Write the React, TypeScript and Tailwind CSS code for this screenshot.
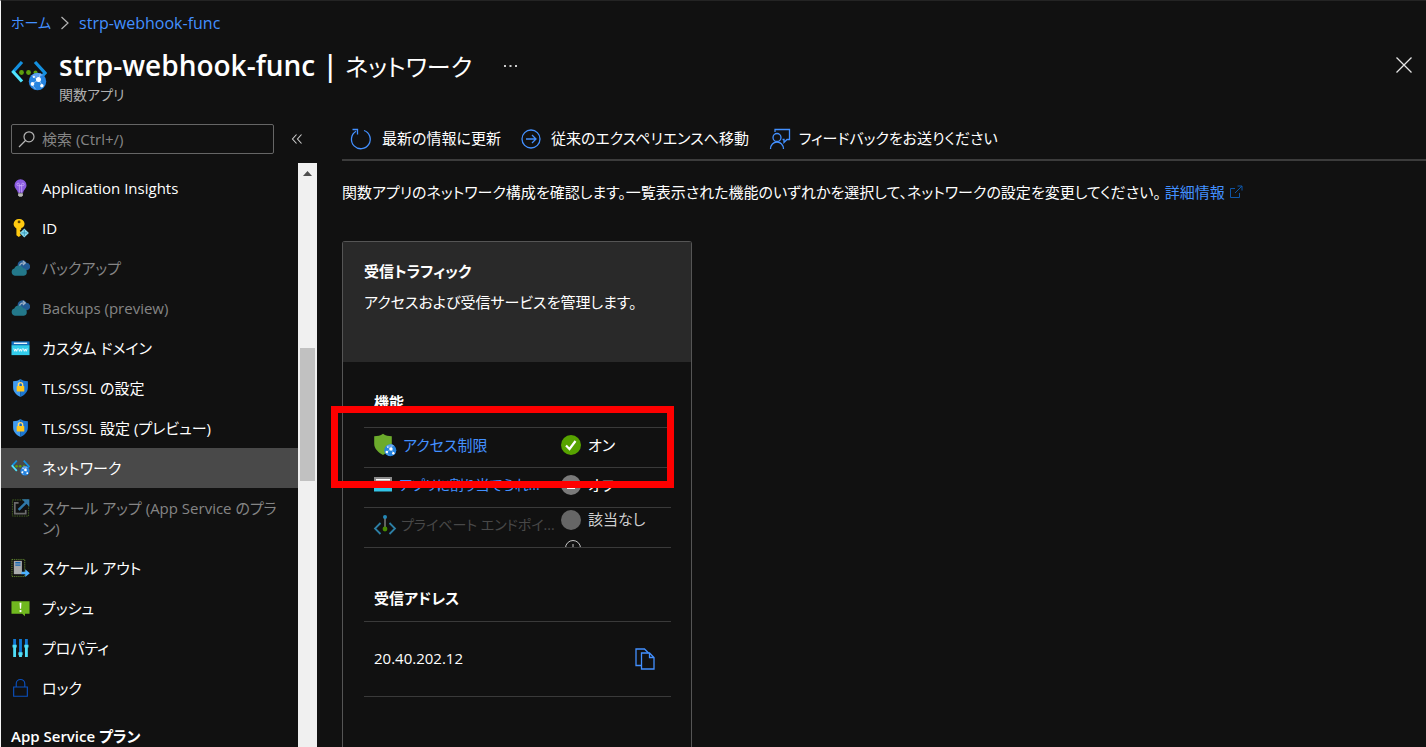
import type { ReactNode } from "react";

type IconProps = { className?: string };

const Globe = ({ x, y, r }: { x: number; y: number; r: number }) => (
  <g transform={`translate(${x} ${y}) scale(${r / 9})`}>
    <circle r="9" fill="#2583df" />
    <path d="M-6.500 -6 A9 9 0 0 1 6 -6.700 L0 -4z" fill="#5ea0ef" />
    <path
      d="M-6 3 L1 -2 L5 4 M1 -2 L3 -8 M-6 3 L-2 8 M1 -2 L-5 -5"
      stroke="#9cc8f5"
      strokeWidth=".9"
      fill="none"
    />
    <circle cx="1" cy="-2" r="2.6" fill="#fff" />
    <circle cx="-5.200" cy="2.500" r="1.900" fill="#fff" />
    <circle cx="4.500" cy="4.500" r="1.800" fill="#fff" />
    <circle cx="-3.800" cy="-4.800" r="1.200" fill="#e5f1fd" />
  </g>
);

const NetworkIcon = ({ className }: IconProps) => (
  <svg viewBox="0 0 36 30" className={className} aria-hidden="true">
    <path d="M11 1 1.500 11.500" stroke="#1490df" strokeWidth="3.200" />
    <path d="M1.500 10 11 20.500" stroke="#50e6ff" strokeWidth="3.200" />
    <path d="M24 1 34 12 31 15.500" stroke="#1490df" strokeWidth="3.200" fill="none" />
    <circle cx="10.500" cy="11.500" r="2.400" fill="#5ea00c" />
    <circle cx="17.500" cy="11.500" r="2.400" fill="#5ea00c" />
    <circle cx="24.500" cy="11.500" r="2" fill="#5ea00c" />
    <Globe x={26.500} y={20.500} r={8.700} />
  </svg>
);

const BulbIcon = ({ className }: IconProps) => (
  <svg viewBox="0 0 20 20" className={className} aria-hidden="true">
    <path
      d="M10 .8a6.300 6.300 0 0 0-6.300 6.300c0 3.600 3.300 4.700 3.500 8h5.600c.2-3.300 3.500-4.400 3.500-8A6.300 6.300 0 0 0 10 .8z"
      fill="#8a5be0"
    />
    <path
      d="M8.800 15V7.500M11.200 15V7.500M8.800 7.500H7.500a1.300 1.300 0 1 1 1.300-1.300v1.300h2.400V6.200a1.300 1.300 0 1 1 1.300 1.300z"
      stroke="#c7a8fa"
      strokeWidth=".8"
      fill="none"
    />
    <path d="M7.500 15.500h5v2.200l-1.200 1.500H8.700l-1.200-1.500z" fill="#b5b5b5" />
  </svg>
);

const KeyIcon = ({ className }: IconProps) => (
  <svg viewBox="0 0 20 20" className={className} aria-hidden="true">
    <path
      d="M8.500.5a5.600 5.600 0 0 0-5.800 5.300c0 2 1.200 3.600 3 4.600v7.100l2.500 2 2.300-2-1.300-1.500 1.300-1.500-1.300-1.700 1.600-1.400v-1.300a5 5 0 0 0 3.500-4.500A5.500 5.500 0 0 0 8.500.5z"
      fill="#ffca10"
    />
    <circle cx="8.500" cy="3.600" r="1.500" fill="#5f4300" />
    <path d="M14 10.500 18.800 15.200 14 20 9.200 15.200z" fill="#8bdcf0" />
    <path d="M14 12v6.500M11 15.200h6" stroke="#2f93b5" strokeWidth=".9" />
  </svg>
);

const BackupIcon = ({ className }: IconProps) => (
  <svg viewBox="0 0 20 20" className={className} aria-hidden="true">
    <path d="M7 12V6.500A5 5 0 0 1 16.300 4.500 4 4 0 0 1 17 12.400z" fill="#215a94" />
    <path d="M9 8c.5-2.500 2.500-3.500 5-3.300M12.500 2.500 15 4.800l-2.500 2" stroke="#a0b2c6" strokeWidth="1.300" fill="none" />
    <path d="M4 18.200a3.900 3.900 0 0 1-.5-7.600 5 5 0 0 1 9.300-.3 4 4 0 0 1 .7 7.900z" fill="#23788a" />
  </svg>
);

const DomainIcon = ({ className }: IconProps) => (
  <svg viewBox="0 0 20 20" className={className} aria-hidden="true">
    <path d="M.5 3h19v4H.5z" fill="#0f6cbd" />
    <path d="M3 4.300h14v1.400H3z" fill="#fff" />
    <path d="M.5 7h19v10.500H.5z" fill="#32cdec" />
    <path
      d="m3 10.500 1 3 1-2.500 1 2.500 1-3m1 0 1 3 1-2.500 1 2.500 1-3m1 0 1 3 1-2.500 1 2.500 1-3"
      stroke="#fff"
      strokeWidth=".9"
      fill="none"
    />
  </svg>
);

const SslIcon = ({ className }: IconProps) => (
  <svg viewBox="0 0 20 20" className={className} aria-hidden="true">
    <path d="M10 .5C8 2.300 5 2.800 2.200 2.800v6.600c0 5 3.800 8 7.800 10.100z" fill="#3f9bf0" />
    <path d="M10 .5c2 1.800 5 2.300 7.800 2.300v6.600c0 5-3.800 8-7.800 10.100z" fill="#1b76d2" />
    <path d="M7.700 8.500V6.600a2.300 2.300 0 0 1 4.600 0v1.900" stroke="#ffd86a" strokeWidth="1.400" fill="none" />
    <rect x="6" y="8" width="8" height="5.800" rx=".7" fill="#ffc81e" />
  </svg>
);

const ScaleUpIcon = ({ className }: IconProps) => (
  <svg viewBox="0 0 20 20" className={className} aria-hidden="true">
    <rect x="1.500" y="1.500" width="17" height="17" fill="none" stroke="#456322" strokeDasharray="1.500 1" />
    <path d="M8 4.500H4v11.500h11.500v-4" stroke="#6b6b6b" strokeWidth="1.800" fill="none" />
    <path d="m8 12 8-8" stroke="#2f78a8" strokeWidth="2.600" />
    <path d="M11.500.8h7.800v7.800z" fill="#2f78a8" />
  </svg>
);

const ScaleOutIcon = ({ className }: IconProps) => (
  <svg viewBox="0 0 20 20" className={className} aria-hidden="true">
    <rect x="1" y="1" width="13.500" height="18" fill="none" stroke="#6f9a35" strokeDasharray="1 1" />
    <path d="M3 2.500h8.500v14H3z" fill="#a9aaac" />
    <path d="M4.500 4.500h5.500M4.500 7h5.500" stroke="#1769b5" strokeWidth="1.400" />
    <path d="M11 14h4v-2.800l4.800 4.300-4.800 4v-2.800h-4z" fill="#4cb1ff" />
  </svg>
);

const PushIcon = ({ className }: IconProps) => (
  <svg viewBox="0 0 20 20" className={className} aria-hidden="true">
    <path d="M.5 3h19v13h-4.800v2.800L11.800 16H.5z" fill="#70b81f" />
    <path d="M9 4.500h2l-.4 6.300H9.400z" fill="#fff" />
    <circle cx="10" cy="13.200" r="1.200" fill="#fff" />
  </svg>
);

const PropertiesIcon = ({ className }: IconProps) => (
  <svg viewBox="0 0 20 20" className={className} aria-hidden="true">
    <path d="M3.800.5v7M10 .5v15M16.200.5v7" stroke="#0f78d4" strokeWidth="3" />
    <path d="M3.800 9v10.500M16.200 9v10.500M10 17v2.500" stroke="#50dff8" strokeWidth="3" />
    <path d="M1.600 6.500h4.400v3H1.600zM14 6.500h4.400v3H14zM7.800 14.500h4.400v3H7.800z" fill="#50dff8" />
  </svg>
);

const LockIcon = ({ className }: IconProps) => (
  <svg viewBox="0 0 20 20" className={className} aria-hidden="true">
    <path d="M2.800 9h14.400v9.700H2.800zM5.500 9V5.500a4.500 4.500 0 0 1 9 0V9" fill="none" stroke="#0b50bd" strokeWidth="1.200" />
  </svg>
);

const RestrictionIcon = ({ className }: IconProps) => (
  <svg viewBox="0 0 24 24" className={className} aria-hidden="true">
    <path
      d="M10 .8C7.500 2.700 4.500 3.200 1.200 3.200v7.500c0 5.300 4.300 8.600 8.800 11.300 4.500-2.700 8.800-6 8.800-11.300V3.200C15.500 3.200 12.500 2.700 10 .8z"
      fill="#6cab2c"
    />
    <Globe x={17.300} y={17.300} r={6} />
  </svg>
);

const AddressIcon = ({ className }: IconProps) => (
  <svg viewBox="0 0 24 24" className={className} aria-hidden="true">
    <path d="M1 4h18v5H1z" fill="#8a8a8a" />
    <path d="M3 6h14v1.500H3z" fill="#fff" />
    <path d="M1 9h18v9.500H1z" fill="#32c5e8" />
  </svg>
);

const EndpointIcon = ({ className }: IconProps) => (
  <svg viewBox="0 0 24 24" className={className} aria-hidden="true">
    <path d="m7.500 10-5.500 5.500L7.500 21M16.500 10l5.500 5.500-5.500 5.500" stroke="#2d7fa5" strokeWidth="1.800" fill="none" />
    <path d="M12 4v11" stroke="#9a9a9a" strokeWidth="1.200" />
    <circle cx="12" cy="4" r="2" fill="#2488b8" />
    <circle cx="12" cy="16" r="2.400" fill="#498c00" />
  </svg>
);

const menuItems: {
  label: string;
  icon: (props: IconProps) => ReactNode;
  disabled?: boolean;
  active?: boolean;
}[] = [
  { label: "Application Insights", icon: BulbIcon },
  { label: "ID", icon: KeyIcon },
  { label: "バックアップ", icon: BackupIcon, disabled: true },
  { label: "Backups (preview)", icon: BackupIcon, disabled: true },
  { label: "カスタム ドメイン", icon: DomainIcon },
  { label: "TLS/SSL の設定", icon: SslIcon },
  { label: "TLS/SSL 設定 (プレビュー)", icon: SslIcon },
  { label: "ネットワーク", icon: NetworkIcon, active: true },
  { label: "スケール アップ (App Service のプラン)", icon: ScaleUpIcon, disabled: true },
  { label: "スケール アウト", icon: ScaleOutIcon },
  { label: "プッシュ", icon: PushIcon },
  { label: "プロパティ", icon: PropertiesIcon },
  { label: "ロック", icon: LockIcon },
];

const PageHeader = () => (
  <header className="pl-[10px] pr-3">
    <nav className="flex items-center gap-2 pt-[10px] leading-6 text-[#4390ff]">
      <a href="#" className="text-sm leading-6">
        ホーム
      </a>
      <svg viewBox="0 0 12 14" className="h-[14px] w-3" aria-hidden="true">
        <path d="m2.500 1 6.500 6-6.500 6" stroke="#b5b5b5" strokeWidth="1.200" fill="none" />
      </svg>
      <a href="#" className="text-base leading-6">
        strp-webhook-func
      </a>
    </nav>
    <div className="flex items-start pt-3">
      <NetworkIcon className="mr-3 mt-[14px] h-[30px] w-9" />
      <div>
        <h1 className="text-[28px] font-semibold leading-9">
          strp-webhook-func | <span className="text-2xl font-normal leading-9">ネットワーク</span>
        </h1>
        <p className="text-sm leading-5 text-[#b0b0b0]">関数アプリ</p>
      </div>
      <button aria-label="その他" className="ml-[29px] mt-[9px] h-5 w-5">
        <svg viewBox="0 0 20 20">
          <path d="M3 9h2v2H3zM8.500 9h2v2h-2zM14 9h2v2h-2z" fill="#ccc" />
        </svg>
      </button>
      <button aria-label="閉じる" className="ml-auto mt-2 h-5 w-5">
        <svg viewBox="0 0 20 20">
          <path d="m2.500 2.500 15 15m0-15-15 15" stroke="#e5e5e5" strokeWidth="1.300" />
        </svg>
      </button>
    </div>
  </header>
);

const SideMenu = () => (
  <aside className="flex w-[316px] shrink-0 flex-col">
    <div className="flex items-center pl-[10px] pt-[19px]">
      <label className="flex h-[30px] w-[263px] items-center gap-[6px] rounded-[2px] border border-[#666] px-[6px]">
        <svg viewBox="0 0 18 18" className="h-[18px] w-[18px] shrink-0" aria-hidden="true">
          <circle cx="11" cy="6.800" r="5" fill="none" stroke="#b5b5b5" strokeWidth="1.200" />
          <path d="m7.500 10.500-6.500 6.500" stroke="#b5b5b5" strokeWidth="1.200" />
        </svg>
        <input
          type="text"
          aria-label="検索"
          placeholder="検索 (Ctrl+/)"
          className="min-w-0 flex-1 bg-transparent outline-none placeholder:text-[#858585]"
        />
      </label>
      <button aria-label="折りたたむ" className="ml-[17px] h-3 w-3">
        <svg viewBox="0 0 12 12">
          <path d="M5.500 1.500 1.500 6l4 4.500M10.500 1.500l-4 4.500 4 4.500" stroke="#ccc" strokeWidth="1.100" fill="none" />
        </svg>
      </button>
    </div>
    <div className="mt-[9px] flex min-h-0 flex-1">
      <div className="min-w-0 flex-1 overflow-hidden">
        <ul className="pt-[5px]">
          {menuItems.map(({ label, icon: Icon, disabled, active }) => (
            <li key={label} className={active ? "bg-[#494949]" : ""}>
              <a
                href="#"
                className={`flex items-start gap-3 py-[10px] pl-[10px] pr-5 leading-5 ${
                  disabled ? "text-[#858585]" : "text-white"
                }`}
              >
                <Icon className="h-5 w-[19px] shrink-0" />
                <span>{label}</span>
              </a>
            </li>
          ))}
        </ul>
        <h2 className="pl-[10px] pt-[18px] font-semibold leading-5">App Service プラン</h2>
      </div>
      <div className="w-[19px] bg-[#f0f0f0]">
        <svg viewBox="0 0 19 20" className="h-5 w-[19px]" aria-hidden="true">
          <path d="M5 13h9l-4.500-5z" fill="#4d4d4d" />
        </svg>
        <div className="mx-auto mt-[165px] h-[133px] w-[15px] bg-[#c1c1c1]" />
      </div>
    </div>
  </aside>
);

const Toolbar = () => (
  <div className="flex h-[43px] items-center gap-5 border-b-2 border-[#3c3c3c] pl-2">
    <button className="flex items-center gap-[10px]">
      <svg viewBox="0 0 22 22" className="h-[22px] w-[22px]" fill="none" stroke="#4390ff" strokeWidth="1.300" aria-hidden="true">
        <path d="M14 2.500a9.400 9.400 0 1 1-8 .8M2.500 1.500h5v5" />
      </svg>
      最新の情報に更新
    </button>
    <button className="flex items-center gap-[10px]">
      <svg viewBox="0 0 20 20" className="h-5 w-5" fill="none" stroke="#4390ff" strokeWidth="1.300" aria-hidden="true">
        <circle cx="10" cy="10" r="9" />
        <path d="M5 10h10M11 6l4 4-4 4" />
      </svg>
      従来のエクスペリエンスへ移動
    </button>
    <button className="flex items-center gap-2">
      <svg viewBox="0 0 22 22" className="h-[22px] w-[22px]" fill="none" stroke="#4390ff" strokeWidth="1.300" aria-hidden="true">
        <circle cx="8" cy="9.500" r="4" />
        <path d="M1.500 21a6.500 7 0 0 1 13 0M6 4V1.500h14.500v10H18l-3 3v-3h-1.500" />
      </svg>
      フィードバックをお送りください
    </button>
  </div>
);

const TrafficCard = () => (
  <section className="mt-[37px] flex w-[350px] flex-1 flex-col rounded-t-[3px] border border-b-0 border-[#555]">
    <div className="h-[120px] bg-[#292929] px-[21px] pt-[17px]">
      <h2 className="font-semibold leading-6">受信トラフィック</h2>
      <p className="pt-[7px] leading-6">アクセスおよび受信サービスを管理します。</p>
    </div>
    <div className="pl-[21px] pr-5 pt-7">
      <div className="relative">
        <table className="w-full table-fixed border-collapse text-left">
          <colgroup>
            <col className="w-[197px]" />
            <col />
          </colgroup>
          <thead>
            <tr className="h-[37px] border-b border-[#3a3a3a]">
              <th colSpan={2} className="pl-[10px] align-top font-semibold leading-6">
                機能
              </th>
            </tr>
          </thead>
          <tbody>
            <tr className="border-b border-[#3a3a3a]">
              <td className="pl-[9px]">
                <div className="flex h-[39px] items-center gap-[6px] pb-1">
                  <RestrictionIcon className="h-6 w-6 shrink-0" />
                  <a href="#" className="truncate text-[#4390ff]">
                    アクセス制限
                  </a>
                </div>
              </td>
              <td>
                <div className="flex h-[39px] items-center gap-[7px] pb-1">
                  <svg viewBox="0 0 20 20" className="h-5 w-5" aria-hidden="true">
                    <circle cx="10" cy="10" r="10" fill="#57a300" />
                    <path d="m5 10.500 3.500 3.500 6-8" stroke="#fff" strokeWidth="2.200" fill="none" />
                  </svg>
                  オン
                </div>
              </td>
            </tr>
            <tr className="border-b border-[#3a3a3a]">
              <td className="pl-[9px]">
                <div className="flex h-[39px] items-center gap-[2px] pb-1">
                  <AddressIcon className="h-6 w-6 shrink-0" />
                  <a href="#" className="text-sm whitespace-nowrap text-[#4390ff]">
                    アプリに割り当てられ...
                  </a>
                </div>
              </td>
              <td>
                <div className="flex h-[39px] items-center gap-[7px] pb-1">
                  <svg viewBox="0 0 20 20" className="h-5 w-5" aria-hidden="true">
                    <circle cx="10" cy="10" r="10" fill="#7a7a7a" />
                    <path d="M6 12.500h8" stroke="#fff" strokeWidth="3" />
                  </svg>
                  オフ
                </div>
              </td>
            </tr>
            <tr className="border-b border-[#3a3a3a]">
              <td className="pl-[9px]">
                <div className="flex h-[39px] items-center gap-1 pb-1">
                  <EndpointIcon className="h-6 w-6 shrink-0" />
                  <span className="text-sm whitespace-nowrap text-[#484848]">プライベート エンドポイ...</span>
                </div>
              </td>
              <td>
                <div className="h-[39px] overflow-hidden text-[#d0d0d0]">
                  <div className="flex h-6 items-center gap-[7px]">
                    <span className="h-5 w-5 rounded-full bg-[#666]" />
                    該当なし
                  </div>
                  <svg viewBox="0 0 16 16" className="ml-1 mt-2 h-4 w-4" fill="none" stroke="#c5c5c5" aria-hidden="true">
                    <circle cx="8" cy="8" r="7.500" />
                    <path d="M8 4v8" />
                  </svg>
                </div>
              </td>
            </tr>
          </tbody>
        </table>
        {/* Highlight around the access restriction row */}
        <div className="pointer-events-none absolute -left-[33px] -right-[3px] top-4 h-[82px] border-[7px] border-[#fe0000]" />
      </div>
      <h3 className="mt-[38px] border-b border-[#3a3a3a] pb-[11px] pl-[10px] font-semibold leading-6">
        受信アドレス
      </h3>
      <div className="flex h-[75px] items-center justify-between border-b border-[#3a3a3a] pl-[10px] pr-4">
        <span>20.40.202.12</span>
        <button aria-label="コピー" className="h-[22px] w-5">
          <svg viewBox="0 0 20 22" fill="none" stroke="#4390ff" strokeWidth="1.300">
            <path d="M6.500 17.500h-5.500V1h8.500l4 4" />
            <path d="M6.500 5h8l4.500 4.500v11.500H6.500zM14.500 5v4.500h4.500" />
          </svg>
        </button>
      </div>
    </div>
  </section>
);

const App = () => {
  return (
    <div className="flex h-screen flex-col overflow-hidden border-l border-t border-l-[#f5f5f5] border-t-[#242424] bg-[#111] font-['Open_Sans','Noto_Sans_CJK_JP',sans-serif] text-[15px] text-white [font-feature-settings:'palt']">
      <PageHeader />
      <div className="flex min-h-0 flex-1">
        <SideMenu />
        <main className="ml-[25px] mt-[13px] flex min-w-0 flex-1 flex-col">
          <Toolbar />
          <p className="pt-[19px] leading-6">
            関数アプリのネットワーク構成を確認します。一覧表示された機能のいずれかを選択して、ネットワークの設定を変更してください。
            <a href="#" className="ml-1 inline-flex items-center gap-1 text-[#4390ff]">
              詳細情報
              <svg viewBox="0 0 14 14" className="h-[14px] w-[14px]" fill="none" stroke="#0f56a8" aria-hidden="true">
                <path d="M6 3.500H1.500v9h9V8M8.500 1h4.500v4.500M13 1 6 8" />
              </svg>
            </a>
          </p>
          <TrafficCard />
        </main>
      </div>
    </div>
  );
};

export default App;
